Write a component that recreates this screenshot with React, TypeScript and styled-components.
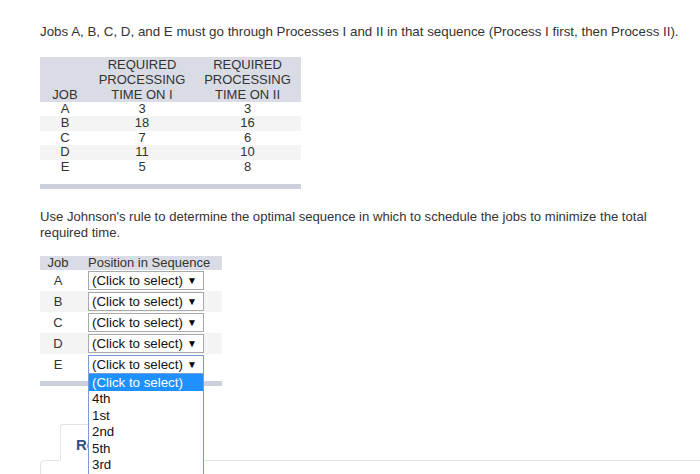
import React from "react";
import styled, { createGlobalStyle } from "styled-components";

const GlobalStyle = createGlobalStyle`
  html, body { margin: 0; padding: 0; background: #fff; }
  body {
    font-family: Arial, "Liberation Sans", sans-serif;
    color: #333;
    font-size: 13px;
    overflow: hidden;
  }
`;

const Page = styled.div`
  padding: 24px 0 0 40px;
  width: 660px;
`;

const Para = styled.p<{ $top: number; $size: number }>`
  margin: ${(p) => p.$top}px 0 0 0;
  width: 645px;
  font-size: ${(p) => p.$size}px;
  line-height: 16px;
`;

const DataWrap = styled.div<{ $w: number; $gap: number; $top: number }>`
  width: ${(p) => p.$w}px;
  margin-top: ${(p) => p.$top}px;
  padding-bottom: ${(p) => p.$gap}px;
  border-bottom: 5px solid #cbd0da;
`;

const DataTable = styled.table`
  border-collapse: collapse;
  width: 100%;
  font-size: 13px;
`;

const HeadCell = styled.th<{ $w?: number }>`
  background: #d9dce4;
  font-weight: normal;
  text-align: center;
  vertical-align: bottom;
  line-height: 15px;
  padding: 0;
  ${(p) => (p.$w ? `width: ${p.$w}px;` : "")}
`;

const Row = styled.tr<{ $alt?: boolean }>`
  background: ${(p) => (p.$alt ? "#f4f4f4" : "#fff")};
`;

const Cell = styled.td`
  text-align: center;
  padding: 0;
  height: 14.4px;
  line-height: 14.4px;
`;

const SeqHead = styled.th<{ $align: string; $pad?: number }>`
  background: #d9dce4;
  font-weight: normal;
  text-align: ${(p) => p.$align};
  padding: 0 0 0 ${(p) => p.$pad ?? 0}px;
  height: 14px;
  line-height: 14px;
`;

const JobCell = styled.td`
  width: 36px;
  text-align: center;
  padding: 0;
  height: 21px;
  line-height: 21px;
`;

const SelCell = styled.td`
  padding: 1px 0 1px 12px;
  height: 19px;
  line-height: 19px;
  position: relative;
`;

const SelectBox = styled.div<{ $focus?: boolean }>`
  box-sizing: border-box;
  width: 116px;
  height: 19px;
  border: 1px solid ${(p) => (p.$focus ? "#7b9bd6" : "#a9a9a9")};
  background: #fff;
  color: #111;
  font-size: 13.3px;
  display: flex;
  align-items: center;
  gap: 4px;
  padding: 0 0 0 3px;
  cursor: default;
`;

const Arrow = styled.span`
  font-size: 10px;
  color: #000;
`;

const ListBox = styled.ul`
  position: absolute;
  left: 12px;
  top: 19px;
  z-index: 5;
  box-sizing: border-box;
  width: 116px;
  margin: 0;
  padding: 0;
  list-style: none;
  background: #fff;
  border: 1px solid #7b9bd6;
  font-size: 13.3px;
  color: #111;
`;

const Option = styled.li<{ $active?: boolean }>`
  height: ${(p) => (p.$active ? 17 : 16.5)}px;
  line-height: ${(p) => (p.$active ? 17 : 16.5)}px;
  padding-left: 3px;
  background: ${(p) => (p.$active ? "#1e90ff" : "transparent")};
  color: ${(p) => (p.$active ? "#fff" : "#111")};
`;

const TabArea = styled.div`
  margin-top: 38px;
  width: 680px;
`;

const TabStrip = styled.div`
  display: flex;
  padding-left: 20px;
  position: relative;
  z-index: 1;
`;

const Tab = styled.div`
  height: 37px;
  border: 1px solid #e3e3e3;
  border-bottom: 1px solid #fff;
  border-radius: 3px 3px 0 0;
  background: #fff;
  padding: 11px 30px 0 15px;
  box-sizing: border-box;
  font-size: 15px;
  font-weight: bold;
  color: #2f5186;
  margin-bottom: -1px;
`;

const Panel = styled.div`
  border: 1px solid #e3e3e3;
  border-radius: 4px 0 0 0;
  height: 40px;
`;

const jobs = [
  ["A", "3", "3"],
  ["B", "18", "16"],
  ["C", "7", "6"],
  ["D", "11", "10"],
  ["E", "5", "8"],
];

const options = ["(Click to select)", "4th", "1st", "2nd", "5th", "3rd"];

export default function App() {
  return (
    <>
      <GlobalStyle />
      <Page>
        <Para $top={0} $size={13.35}>
          Jobs A, B, C, D, and E must go through Processes I and II in that
          sequence (Process I first, then Process II).
        </Para>
        <DataWrap $w={261} $gap={10} $top={17}>
          <DataTable>
            <thead>
              <tr>
                <HeadCell $w={50}>JOB</HeadCell>
                <HeadCell $w={104}>
                  REQUIRED
                  <br />
                  PROCESSING
                  <br />
                  TIME ON I
                </HeadCell>
                <HeadCell>
                  REQUIRED
                  <br />
                  PROCESSING
                  <br />
                  TIME ON II
                </HeadCell>
              </tr>
            </thead>
            <tbody>
              {jobs.map((j, i) => (
                <Row key={j[0]} $alt={i % 2 === 1}>
                  <Cell>{j[0]}</Cell>
                  <Cell>{j[1]}</Cell>
                  <Cell>{j[2]}</Cell>
                </Row>
              ))}
            </tbody>
          </DataTable>
        </DataWrap>
        <Para $top={20} $size={13.1}>
          Use Johnson's rule to determine the optimal sequence in which to
          schedule the jobs to minimize the total required time.
        </Para>
        <DataWrap $w={182} $gap={6} $top={15}>
          <DataTable>
            <thead>
              <tr>
                <SeqHead $align="center">Job</SeqHead>
                <SeqHead $align="left" $pad={12}>
                  Position in Sequence
                </SeqHead>
              </tr>
            </thead>
            <tbody>
              {jobs.map((j, i) => (
                <Row key={j[0]} $alt={i % 2 === 1}>
                  <JobCell>{j[0]}</JobCell>
                  <SelCell>
                    <SelectBox $focus={i === 4}>
                      <span>(Click to select)</span>
                      <Arrow>▼</Arrow>
                    </SelectBox>
                    {i === 4 && (
                      <ListBox>
                        {options.map((o, k) => (
                          <Option key={o} $active={k === 0}>
                            {o}
                          </Option>
                        ))}
                      </ListBox>
                    )}
                  </SelCell>
                </Row>
              ))}
            </tbody>
          </DataTable>
        </DataWrap>
        <TabArea>
          <TabStrip>
            <Tab>Results</Tab>
          </TabStrip>
          <Panel />
        </TabArea>
      </Page>
    </>
  );
}
